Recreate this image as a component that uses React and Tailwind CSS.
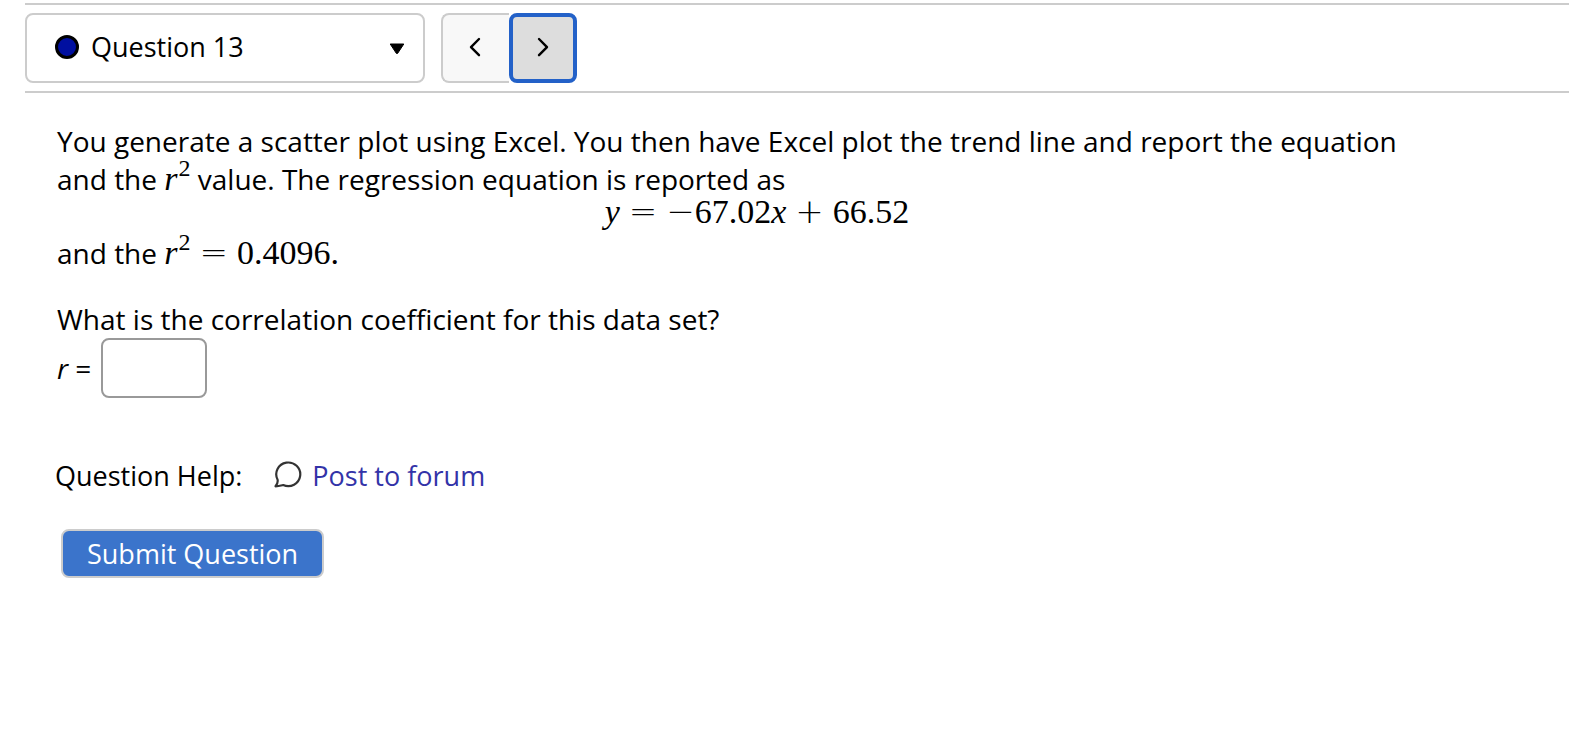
import React from "react";

function Op({ children }) {
  return (
    <span className="mx-[9px] font-['DejaVu_Sans',sans-serif] text-[34px] leading-0 font-extralight">
      {children}
    </span>
  );
}

function RSquared() {
  return (
    <span className="font-['Liberation_Serif',serif] text-[34px] leading-0">
      <i>r</i>
      <sup className="-top-3.5 ml-px text-2xl leading-0">2</sup>
    </span>
  );
}

function QuestionNav() {
  return (
    <header className="ml-[25px] flex gap-4 border-y-2 border-[#ccc] py-2">
      <button
        type="button"
        aria-haspopup="listbox"
        className="flex h-[70px] w-[400px] items-center gap-3 rounded-lg border-2 border-[#ccc] bg-white pr-[18px] pb-0.5 pl-7 text-[27px]"
      >
        <span className="size-6 rounded-full border-3 border-black bg-[#000fa0]" />
        <span className="flex-1 text-left">Question 13</span>
        <svg className="mt-1 h-3 w-4" viewBox="0 0 16 12" aria-hidden="true">
          <path d="M1.200 1h13.600L8.700 10.300a1 1 0 0 1-1.400 0z" stroke="#000" strokeLinejoin="round" />
        </svg>
      </button>
      <nav className="flex" aria-label="Questions">
        <button
          type="button"
          aria-label="Previous question"
          className="flex h-[70px] w-[68px] items-center justify-center rounded-l-lg border-2 border-r-0 border-[#ccc] bg-[#f8f8f8] pr-0.5 pb-0.5"
        >
          <svg className="h-6 w-4" viewBox="0 0 16 24" fill="none" aria-hidden="true">
            <path d="M12 4 4 12.200l8 8" stroke="#000" strokeWidth="2.400" strokeLinecap="round" strokeLinejoin="round" />
          </svg>
        </button>
        <button
          type="button"
          aria-label="Next question"
          className="flex h-[70px] w-[68px] items-center justify-center rounded-lg border-4 border-[#2361c8] bg-[#ddd] pb-0.5"
        >
          <svg className="h-6 w-4" viewBox="0 0 16 24" fill="none" aria-hidden="true">
            <path d="M4 4l8 8.200-8 8" stroke="#000" strokeWidth="2.400" strokeLinecap="round" strokeLinejoin="round" />
          </svg>
        </button>
      </nav>
    </header>
  );
}

export default function App() {
  return (
    <div className="bg-white pt-[3px] font-['Open_Sans',sans-serif] text-[28px] leading-[38px] text-black">
      <QuestionNav />
      <main className="pt-[29px] pr-6 pl-[55px]">
        <div className="max-w-[1402px] pl-0.5">
          <p>
            You generate a scatter plot using Excel. You then have Excel plot the trend line and report the equation
            <br />
            and the <RSquared /> value. The regression equation is reported as
          </p>
          <p className="text-center font-['Liberation_Serif',serif] text-[34px] leading-7">
            <i>y</i>
            <Op>=</Op>
            <span className="font-['DejaVu_Sans',sans-serif] text-[34px] leading-0 font-extralight">−</span>
            67.02<i>x</i>
            <Op>+</Op>
            66.52
          </p>
          <p className="mt-2">
            and the <RSquared />
            <span className="font-['Liberation_Serif',serif] text-[34px] leading-0">
              <Op>=</Op>0.4096.
            </span>
          </p>
          <p className="mt-7">What is the correlation coefficient for this data set?</p>
          <div className="flex items-center gap-2.5">
            <label htmlFor="answer">
              <i>r</i> =
            </label>
            <input id="answer" type="text" className="h-[60px] w-[106px] rounded-lg border-2 border-[#999] bg-white px-3" />
          </div>
        </div>
        <div className="mt-[59px] flex items-center text-[27px]">
          <span>Question Help:</span>
          <svg className="mr-2.5 mb-1 ml-8 size-7" viewBox="0 0 28 28" fill="none" aria-hidden="true">
            <path
              d="M1.500 26.300C3.300 24.300 4 22.300 3.600 19.700A12 11.800 0 1 1 9.200 25C6.800 25.600 4.500 26.300 1.500 26.300Z"
              stroke="#333"
              strokeWidth="2.200"
              strokeLinejoin="round"
            />
          </svg>
          <a href="#forum" className="text-[#3333a8]">
            Post to forum
          </a>
        </div>
        <button
          type="button"
          className="mt-[34px] ml-1.5 flex h-[49px] items-center rounded-lg border-2 border-[#ccc] bg-[#3b74cb] px-6 text-[27px] text-white"
        >
          Submit Question
        </button>
      </main>
    </div>
  );
}
